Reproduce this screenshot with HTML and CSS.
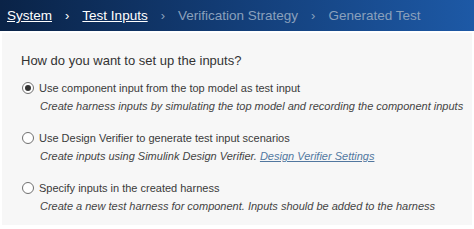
FILE: index.html
```html
<!DOCTYPE html>
<html lang="en">
<head>
    <meta charset="UTF-8">
    <title>Create Test Harness</title>
    <link rel="stylesheet" href="styles.css">
</head>
<body>

<div class="steps">
    <a class="step done" href="#">System</a>
    <span class="sep done">›</span>
    <a class="step done" href="#">Test Inputs</a>
    <span class="sep">›</span>
    <span class="step">Verification Strategy</span>
    <span class="sep">›</span>
    <span class="step">Generated Test</span>
</div>

<div class="panel">
    <h2>How do you want to set up the inputs?</h2>

    <label class="option">
        <span class="row"><input type="radio" name="src" checked> Use component input from the top model as test input</span>
        <span class="desc">Create harness inputs by simulating the top model and recording the component inputs</span>
    </label>

    <label class="option">
        <span class="row"><input type="radio" name="src"> Use Design Verifier to generate test input scenarios</span>
        <span class="desc">Create inputs using Simulink Design Verifier. <a href="#">Design Verifier Settings</a></span>
    </label>

    <label class="option">
        <span class="row"><input type="radio" name="src"> Specify inputs in the created harness</span>
        <span class="desc">Create a new test harness for component. Inputs should be added to the harness</span>
    </label>
</div>

</body>
</html>
```

FILE: styles.css
```css
body {
    margin: 0;
    font-family: "Liberation Sans", Arial, sans-serif;
    background: #ffffff;
    width: 474px;
    height: 229px;
    overflow: hidden;
}

/* wizard breadcrumb */
.steps {
    height: 31px;
    display: flex;
    align-items: center;
    padding-left: 7px;
    background: linear-gradient(to right, #0a2347 0%, #123b73 45%, #1d59a6 100%);
    font-size: 13.5px;
}

.step {
    color: #8aa0bc;
    text-decoration: none;
}

.step.done {
    color: #ffffff;
    text-decoration: underline;
}

.sep {
    color: #8aa0bc;
    margin: 0 13px;
    font-size: 13px;
}

.sep.done {
    color: #ffffff;
}

.panel {
    margin: 2px 2px 0 2px;
    background: #f7f7f7;
    height: 192px;
    padding: 20px 0 0 19px;
    box-sizing: border-box;
}

h2 {
    margin: 0 0 11px 0;
    font-size: 13px;
    line-height: 16px;
    font-weight: normal;
    color: #333333;
}

.option {
    display: block;
    margin-bottom: 17px;
}

.row {
    display: flex;
    align-items: center;
    height: 16px;
    font-size: 11px;
    color: #3a3a3a;
}

/* radio drawn by hand so the ring stays grey */
.row input {
    appearance: none;
    margin: 0 5px 0 1px;
    width: 12px;
    height: 12px;
    border: 1px solid #707070;
    border-radius: 50%;
    background: #ffffff;
    box-sizing: border-box;
    display: flex;
    align-items: center;
    justify-content: center;
}

.row input:checked::after {
    content: "";
    width: 6px;
    height: 6px;
    border-radius: 50%;
    background: #333333;
}

.desc {
    display: block;
    margin: 3px 0 0 19px;
    line-height: 14px;
    font-size: 11px;
    font-style: italic;
    color: #444444;
}

.desc a {
    color: #52779f;
}
```
